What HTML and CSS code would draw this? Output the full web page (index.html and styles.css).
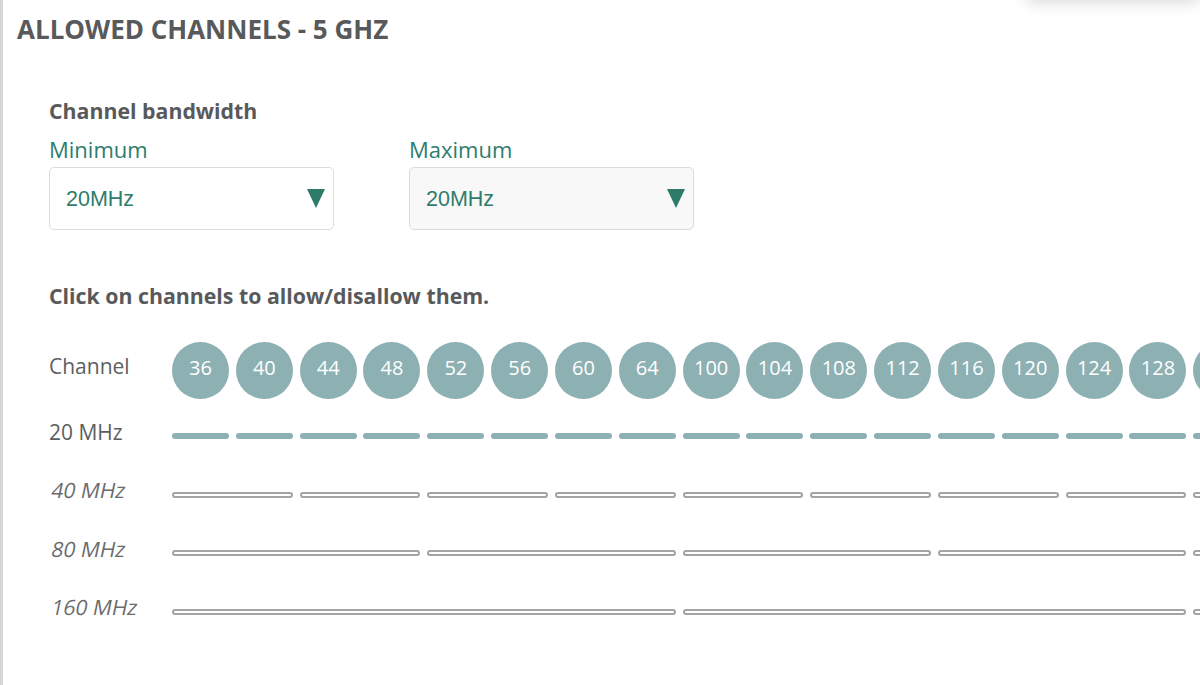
FILE: index.html
```html
<!DOCTYPE html>
<html lang="en">
<head>
<meta charset="utf-8">
<title>Allowed channels - 5 GHz</title>
<link rel="stylesheet" href="styles.css">
</head>
<body>
<div class="page">
  <div class="edge-mark"></div>
  <div class="top-popover"></div>
  <div class="content">
    <h2 class="title">ALLOWED CHANNELS - 5 GHZ</h2>
    <section class="section">
      <h3 class="bw-heading">Channel bandwidth</h3>
      <div class="fields">
        <div class="field">
          <label class="field-label">Minimum</label>
          <div class="select">
            <span class="select-value">20MHz</span>
            <svg class="caret" width="18" height="19" viewBox="0 0 18 19"><polygon points="0,0 18,0 9,19" fill="#2e7a6b"/></svg>
          </div>
        </div>
        <div class="field">
          <label class="field-label">Maximum</label>
          <div class="select select-alt">
            <span class="select-value">20MHz</span>
            <svg class="caret" width="18" height="19" viewBox="0 0 18 19"><polygon points="0,0 18,0 9,19" fill="#2e7a6b"/></svg>
          </div>
        </div>
      </div>
      <p class="hint">Click on channels to allow/disallow them.</p>
      <div class="channels">
        <div class="row row-channels">
          <div class="row-label"><span class="label-text">Channel</span></div>
          <div class="track">
            <div class="chan">36</div><div class="chan">40</div><div class="chan">44</div><div class="chan">48</div>
            <div class="chan">52</div><div class="chan">56</div><div class="chan">60</div><div class="chan">64</div>
            <div class="chan">100</div><div class="chan">104</div><div class="chan">108</div><div class="chan">112</div>
            <div class="chan">116</div><div class="chan">120</div><div class="chan">124</div><div class="chan">128</div>
            <div class="chan">132</div><div class="chan">136</div><div class="chan">140</div><div class="chan">144</div>
          </div>
        </div>
        <div class="row row-band">
          <div class="row-label"><span class="label-text">20 MHz</span></div>
          <div class="track">
            <div class="bar on"></div><div class="bar on"></div><div class="bar on"></div><div class="bar on"></div>
            <div class="bar on"></div><div class="bar on"></div><div class="bar on"></div><div class="bar on"></div>
            <div class="bar on"></div><div class="bar on"></div><div class="bar on"></div><div class="bar on"></div>
            <div class="bar on"></div><div class="bar on"></div><div class="bar on"></div><div class="bar on"></div>
            <div class="bar on"></div><div class="bar on"></div><div class="bar on"></div><div class="bar on"></div>
          </div>
        </div>
        <div class="row row-band">
          <div class="row-label"><span class="label-text slanted">40 MHz</span></div>
          <div class="track">
            <div class="bar off span2"></div><div class="bar off span2"></div><div class="bar off span2"></div><div class="bar off span2"></div>
            <div class="bar off span2"></div><div class="bar off span2"></div><div class="bar off span2"></div><div class="bar off span2"></div>
            <div class="bar off span2"></div><div class="bar off span2"></div>
          </div>
        </div>
        <div class="row row-band">
          <div class="row-label"><span class="label-text slanted">80 MHz</span></div>
          <div class="track">
            <div class="bar off span4"></div><div class="bar off span4"></div><div class="bar off span4"></div><div class="bar off span4"></div>
            <div class="bar off span4"></div>
          </div>
        </div>
        <div class="row row-band">
          <div class="row-label"><span class="label-text slanted">160 MHz</span></div>
          <div class="track">
            <div class="bar off span8"></div><div class="bar off span8"></div><div class="bar off span4"></div>
          </div>
        </div>
      </div>
    </section>
  </div>
</div>
</body>
</html>
```

FILE: styles.css
```css
html, body {
  margin: 0;
  padding: 0;
  background: #ffffff;
}
body {
  width: 1200px;
  height: 685px;
  overflow: hidden;
  font-family: "Open Sans", "Noto Sans", sans-serif;
}
.page {
  position: relative;
  height: 685px;
  border-left: 3px solid #d6d6d6;
  box-sizing: border-box;
  overflow: hidden;
}
.edge-mark {
  position: absolute;
  left: -3px;
  top: 8px;
  width: 2px;
  height: 20px;
  background: #e8a46a;
}
.top-popover {
  position: absolute;
  top: -30px;
  right: 1px;
  width: 172px;
  height: 30px;
  background: #fff;
  box-shadow: 0 2px 16px rgba(0, 0, 0, 0.16);
}
.content {
  padding-left: 14px;
}
.title {
  margin: 11px 0 0;
  font-size: 26px;
  line-height: 36px;
  font-weight: 700;
  color: #58595b;
}
.section {
  margin-left: 32px;
}
.bw-heading {
  margin: 49px 0 0;
  font-size: 21.3px;
  line-height: 30px;
  font-weight: 700;
  color: #58595b;
}
.fields {
  display: flex;
  gap: 75px;
  margin-top: 8px;
}
.field {
  display: flex;
  flex-direction: column;
  width: 285px;
}
.field-label {
  font-size: 22px;
  line-height: 30px;
  color: #2e7d6c;
}
.select {
  margin-top: 2.5px;
  height: 63.5px;
  box-sizing: border-box;
  border: 1px solid #dcdcdc;
  border-radius: 5px;
  background: #fff;
  display: flex;
  align-items: center;
  justify-content: space-between;
  padding: 0 8px 0 16px;
}
.select-alt {
  background: #f8f8f8;
}
.select-value {
  font-family: "Liberation Sans", Arial, sans-serif;
  font-size: 21.5px;
  color: #2e7d6c;
  padding-top: 2px;
}
.caret {
  display: block;
  margin-top: 1px;
}
.hint {
  margin: 51px 0 0;
  font-size: 21.3px;
  line-height: 30px;
  font-weight: 700;
  color: #58595b;
}
.channels {
  margin-top: 31px;
}
.row {
  display: flex;
  align-items: center;
}
.row-channels {
  height: 57px;
  margin-bottom: 7.7px;
}
.row-band {
  height: 58.65px;
}
.row-label {
  width: 123px;
  flex: none;
  font-size: 21px;
  line-height: 28px;
  color: #5d5e60;
  padding-bottom: 9px;
}
.label-text {
  display: inline-block;
}
.label-text.slanted {
  color: #6a6b6d;
  transform: skewX(-12deg);
  transform-origin: left bottom;
}
.track {
  flex: none;
  display: grid;
  grid-template-columns: repeat(20, 57px);
  column-gap: 6.84px;
  align-items: center;
}
.chan {
  width: 57px;
  height: 57px;
  border-radius: 50%;
  background: #8db0b2;
  color: #ffffff;
  font-size: 20px;
  display: flex;
  align-items: center;
  justify-content: center;
  box-sizing: border-box;
  padding-bottom: 6px;
}
.bar {
  height: 6px;
  border-radius: 3px;
  box-sizing: border-box;
}
.bar.on {
  background: #8db0b2;
}
.bar.off {
  background: #ffffff;
  border: 2px solid #a3a3a3;
}
.span2 { grid-column: span 2; }
.span4 { grid-column: span 4; }
.span8 { grid-column: span 8; }
```
